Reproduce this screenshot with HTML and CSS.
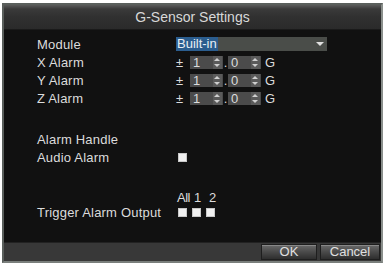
FILE: index.html
```html
<!DOCTYPE html>
<html>
<head>
<meta charset="utf-8">
<link rel="stylesheet" href="styles.css">
</head>
<body>
<div class="win">
  <div class="title">G-Sensor Settings</div>
  <div class="body">
    <div class="row r-module">
      <div class="label">Module</div>
      <div class="select"><span class="sel-text">Built-in</span><span class="sel-arrow"></span></div>
    </div>
    <div class="row">
      <div class="label">X Alarm</div>
      <div class="spinrow"><span class="pm">±</span><div class="spin"><span>1</span><i class="arr"></i></div><span class="dot">.</span><div class="spin"><span>0</span><i class="arr"></i></div><span class="g">G</span></div>
    </div>
    <div class="row">
      <div class="label">Y Alarm</div>
      <div class="spinrow"><span class="pm">±</span><div class="spin"><span>1</span><i class="arr"></i></div><span class="dot">.</span><div class="spin"><span>0</span><i class="arr"></i></div><span class="g">G</span></div>
    </div>
    <div class="row">
      <div class="label">Z Alarm</div>
      <div class="spinrow"><span class="pm">±</span><div class="spin"><span>1</span><i class="arr"></i></div><span class="dot">.</span><div class="spin"><span>0</span><i class="arr"></i></div><span class="g">G</span></div>
    </div>
    <div class="row r-handle">
      <div class="label">Alarm Handle</div>
    </div>
    <div class="row">
      <div class="label">Audio Alarm</div>
      <div class="checks"><span class="cb"></span></div>
    </div>
    <div class="row r-heads">
      <div class="label"></div>
      <div class="heads"><span class="h-all">All</span><span class="h1">1</span><span class="h2">2</span></div>
    </div>
    <div class="row r-trigger">
      <div class="label">Trigger Alarm Output</div>
      <div class="checks"><span class="cb"></span><span class="cb"></span><span class="cb"></span></div>
    </div>
  </div>
  <div class="footer">
    <div class="btn btn-ok">OK</div>
    <div class="btn btn-cancel">Cancel</div>
  </div>
</div>
</body>
</html>
```
FILE: styles.css
```css
html, body {
  margin: 0;
  padding: 0;
  background: #ffffff;
}
body {
  width: 388px;
  height: 267px;
  font-family: "Liberation Sans", Arial, sans-serif;
  overflow: hidden;
}
.win {
  margin: 3px 0 0 2px;
  width: 377px;
  height: 256px;
  border: 2px solid #5a5f5c;
  border-right-color: #8a8f8c;
  border-bottom-color: #7a7f7c;
  background: #121212;
  display: flex;
  flex-direction: column;
}
.title {
  height: 24px;
  line-height: 24px;
  text-align: center;
  color: #d8d8d8;
  font-size: 14px;
  background: linear-gradient(#5a5a5a 0, #4a4a4a 2px, #3a3a3a 4px, #303030 12px, #2a2a2a 100%);
  border-bottom: 1px solid #1a1a1a;
}
.body {
  flex: 1;
  background: #111111;
  padding: 5px 0 0 33px;
  display: flex;
  flex-direction: column;
}
.row {
  display: flex;
  align-items: center;
  height: 18px;
}
.label {
  width: 139px;
  color: #dcdcdc;
  font-size: 13px;
  letter-spacing: 0.2px;
}
.select {
  width: 151px;
  height: 14px;
  background: #4a4d49;
  display: flex;
  align-items: center;
  justify-content: space-between;
}
.sel-text {
  background: #2b5d8e;
  color: #e8eef4;
  font-size: 13px;
  line-height: 14px;
  padding: 0 1px 0 1px;
}
.sel-arrow {
  width: 0;
  height: 0;
  border-left: 4px solid transparent;
  border-right: 4px solid transparent;
  border-top: 4px solid #e0e0e0;
  margin-right: 3px;
}
.spinrow {
  display: flex;
  align-items: center;
  color: #dcdcdc;
  font-size: 13px;
}
.pm {
  width: 14px;
}
.spin {
  width: 33px;
  height: 13px;
  background: #4b4b4b;
  display: flex;
  align-items: center;
  justify-content: space-between;
  color: #dcdcdc;
  font-size: 13px;
  line-height: 13px;
}
.spin span {
  padding-left: 3px;
}
.arr {
  position: relative;
  width: 9px;
  height: 13px;
  background: #5a5a5a;
  margin-right: 1px;
}
.arr::before, .arr::after {
  content: "";
  position: absolute;
  left: 1px;
  width: 0;
  height: 0;
  border-left: 3px solid transparent;
  border-right: 3px solid transparent;
}
.arr::before {
  top: 2px;
  border-bottom: 3px solid #cfcfcf;
}
.arr::after {
  bottom: 2px;
  border-top: 3px solid #cfcfcf;
}
.dot {
  width: 5px;
  text-align: center;
}
.g {
  padding-left: 4px;
}
.r-handle {
  margin-top: 23px;
}
.checks {
  display: flex;
  gap: 5px;
  padding-left: 2px;
}
.cb {
  width: 9px;
  height: 9px;
  background: #f0f0f0;
  border: 1px solid #c8c8c8;
  box-sizing: border-box;
}
.r-heads {
  margin-top: 24px;
  height: 14px;
}
.heads {
  display: flex;
  color: #dcdcdc;
  font-size: 13px;
  padding-left: 1px;
}
.h-all { width: 17px; letter-spacing: -0.5px; }
.h1 { width: 15px; }
.h2 { width: 10px; }
.r-trigger {
  height: 16px;
}
.footer {
  height: 18px;
  background: #383838;
  border-top: 1px solid #222;
  display: flex;
  justify-content: flex-end;
  align-items: center;
  gap: 3px;
  padding-right: 1px;
}
.btn {
  height: 14px;
  line-height: 14px;
  text-align: center;
  color: #e0e0e0;
  font-size: 13px;
  background: linear-gradient(#6a6a6a, #4a4a4a 50%, #2e2e2e);
  border: 1px solid #1e1e1e;
  box-shadow: inset 0 1px 0 #888;
}
.btn-ok { width: 54px; }
.btn-cancel { width: 58px; }
```
